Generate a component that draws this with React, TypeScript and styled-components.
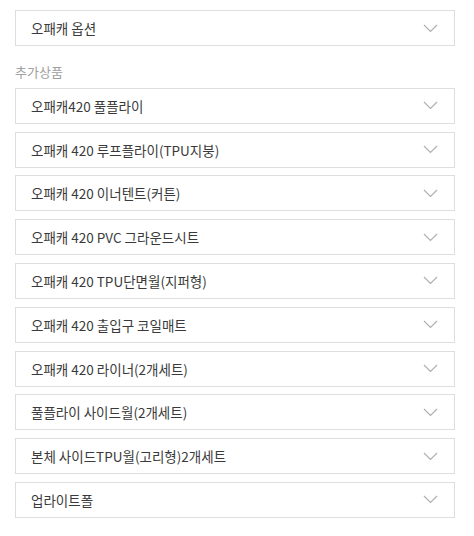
import React from "react";
import styled, { createGlobalStyle } from "styled-components";

const GlobalStyle = createGlobalStyle`
    body {
        margin: 0;
        background: #fff;
        font-family: "Noto Sans CJK KR", "Noto Sans", sans-serif;
    }
`;

const Wrap = styled.div`
    padding: 10px 19px 0 15px;
`;

const SelectBox = styled.div`
    display: flex;
    align-items: center;
    justify-content: space-between;
    box-sizing: border-box;
    height: 36px;
    padding: 0 16px 0 15px;
    margin-bottom: 7.8px;
    border: 1px solid #dedede;
    background: #fff;
    color: #3a3a3a;
    font-size: 13.5px;
    cursor: pointer;
`;

const Label = styled.div`
    height: 34px;
    padding-top: 2px;
    box-sizing: border-box;
    display: flex;
    align-items: center;
    color: #a0a0a0;
    font-size: 13px;
    margin-top: 4px;
`;

const Chevron = () => (
    <svg width="15" height="9" viewBox="0 0 15 9" fill="none">
        <path d="M1 1 L7.5 7.5 L14 1" stroke="#b0b0b0" strokeWidth="1.2" />
    </svg>
);

const extras = [
    "오패캐420 풀플라이",
    "오패캐 420 루프플라이(TPU지붕)",
    "오패캐 420 이너텐트(커튼)",
    "오패캐 420 PVC 그라운드시트",
    "오패캐 420 TPU단면월(지퍼형)",
    "오패캐 420 출입구 코일매트",
    "오패캐 420 라이너(2개세트)",
    "풀플라이 사이드월(2개세트)",
    "본체 사이드TPU월(고리형)2개세트",
    "업라이트폴",
];

const App = () => {
    return (
        <Wrap>
            <GlobalStyle />
            <SelectBox>
                <span>오패캐 옵션</span>
                <Chevron />
            </SelectBox>
            <Label>추가상품</Label>
            {extras.map((name) => (
                <SelectBox key={name}>
                    <span>{name}</span>
                    <Chevron />
                </SelectBox>
            ))}
        </Wrap>
    );
};

export default App;
